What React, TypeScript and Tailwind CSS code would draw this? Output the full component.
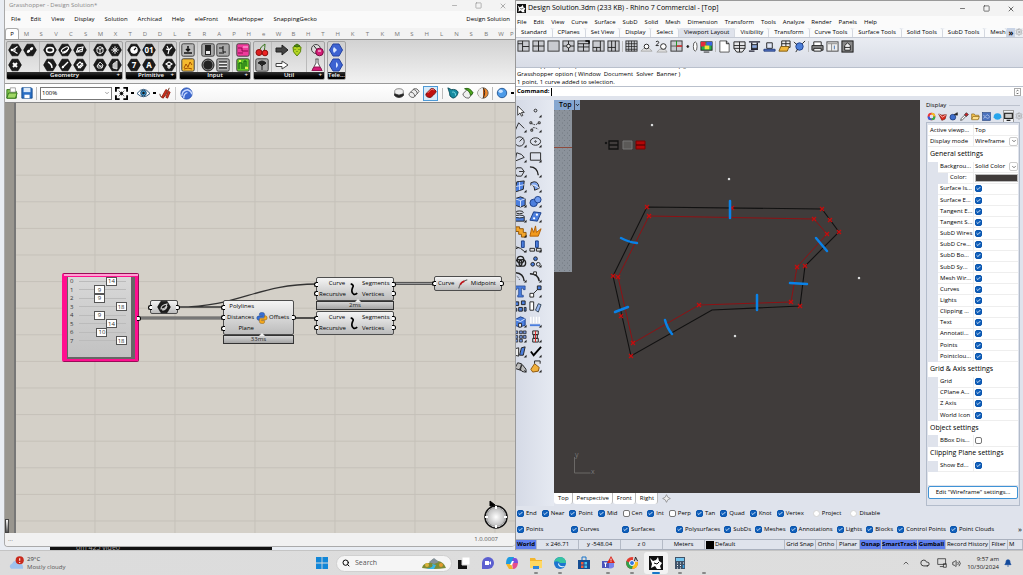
import type { ReactNode } from 'react'
import { Check, ChevronDown, ChevronUp, Cloud, Bell, Volume2, Search, Settings, Minus, Square, X } from 'lucide-react'

/* ---------- shared bits ---------- */

function Icon({ children, className = 'h-[14px] w-[14px]', title }: { children: ReactNode; className?: string; title?: string }) {
  return (
    <svg viewBox="0 0 14 14" className={`shrink-0 ${className}`} fill="none" stroke="#222" aria-label={title}>
      {children}
    </svg>
  )
}

function CheckItem({ label, checked = true, round = false, className = '' }: { label: string; checked?: boolean; round?: boolean; className?: string }) {
  return (
    <label className={`flex shrink-0 items-center gap-[2px] ${className}`}>
      <Tick checked={checked} round={round} />
      {label}
    </label>
  )
}

function Tick({ checked, round = false, id }: { checked: boolean; round?: boolean; id?: string }) {
  return (
    <span className="relative flex h-[7px] w-[7px] shrink-0">
      <input
        id={id}
        type="checkbox"
        defaultChecked={checked}
        className={`peer h-[7px] w-[7px] appearance-none border bg-white checked:border-[#0a55ad] checked:bg-[#0f5fbb] ${
          round ? 'rounded-full border-[#d5d5d5]' : 'rounded-[2px] border-[#777]'
        }`}
      />
      <Check className="pointer-events-none absolute top-px left-px hidden h-[5px] w-[5px] text-white peer-checked:block" strokeWidth={4} />
    </span>
  )
}

function WindowButtons({ color }: { color: string }) {
  return (
    <div className={`flex items-center gap-[17px] pr-[8px] ${color}`}>
      <button aria-label="Minimize"><Minus className="h-[7px] w-[7px]" /></button>
      <button aria-label="Maximize"><Square className="h-[7px] w-[7px]" /></button>
      <button aria-label="Close"><X className="h-[8px] w-[8px]" /></button>
    </div>
  )
}

/* ---------- Grasshopper ribbon ---------- */

const GH_MENU = ['File', 'Edit', 'View', 'Display', 'Solution', 'Archicad', 'Help', 'eleFront', 'MetaHopper', 'SnappingGecko']
const GH_TABS = 'MSVCSMXTDDLERAPHeWBHTHKTKMSHLNSBWP'.split('')

function Hex({ children }: { children: ReactNode }) {
  return (
    <Icon>
      <path d="M4 1.2h6L13.4 7 10 12.8H4L.6 7z" fill="#1b1b1b" stroke="#000" strokeWidth=".6" />
      <g stroke="#fff" strokeWidth="1.1">{children}</g>
    </Icon>
  )
}

function Tile({ children, fill = '#a9a9a9' }: { children: ReactNode; fill?: string }) {
  return (
    <Icon>
      <rect x=".8" y=".8" width="12.4" height="12.4" rx="1.5" fill={fill} stroke="#444" />
      {children}
    </Icon>
  )
}

const hexText = (s: string) => (
  <text x="7" y="10" fontSize="8" fontWeight="700" textAnchor="middle" fill="#fff" stroke="none">{s}</text>
)

interface Group {
  name: string
  sections: ReactNode[][][]
}

const GROUPS: Group[] = [
  {
    name: 'Geometry',
    sections: [
      [
        [<Hex><path d="M3.500 7.500 9.500 3.500M4 7l5.500 3.500M7 5v3" /><circle cx="4" cy="7" r=".8" fill="#fff" /></Hex>, <Hex><path d="M5 5l4 4M9 5l-4 4" strokeWidth="2" /></Hex>],
        [<Hex><path d="M4 9.500l6-5" /><path d="M4.500 9l2-1.500M9.500 5l-2 1.500" strokeWidth="2.500" /></Hex>, null],
      ],
      [
        [<Hex><ellipse cx="7" cy="7" rx="3.500" ry="2.500" strokeWidth="1.500" /></Hex>, <Hex><path d="M5 4q4 2 4 6" strokeWidth="1.500" /></Hex>],
        [<Hex><ellipse cx="7" cy="6.500" rx="4" ry="1.800" transform="rotate(-30 7 6.500)" /><path d="M4 10q5 0 6-4" /></Hex>, <Hex><path d="M4 10l6-6" strokeWidth="1.500" /><circle cx="5" cy="9" r=".6" /></Hex>],
        [<Hex><path d="M3.500 9 5 5l5-1-1 4.500zM5 8l4-2" /></Hex>, <Hex><path d="M4 7l3-3 3 3-3 3zM5 10l5-5" /></Hex>],
      ],
      [
        [<Hex><path d="M4 5l3-1.500L10 5v4l-3 2-3-2zM4 5l3 1.500L10 5M7 6.500V11" strokeWidth=".9" /></Hex>, <Hex><path d="M4 8l3-4 3 3-1 3H5zM5 6l4 4M4 8h6" strokeWidth=".8" /></Hex>],
        [<Hex><path d="M7 3v8M3 7h8M4.500 4.500l5 5M9.500 4.500l-5 5" strokeWidth=".7" /><circle cx="7" cy="7" r="2" strokeWidth=".6" /></Hex>, <Hex><path d="M5 10V6l4-3v8zM7 5v5" strokeWidth=".8" fill="#999" /></Hex>],
      ],
    ],
  },
  {
    name: 'Primitive',
    sections: [
      [
        [<Hex><circle cx="7" cy="7" r="3.200" fill="#fff" /><path d="M7 7 9 5" stroke="#111" /></Hex>, <Hex>{hexText('7')}</Hex>],
        [<Hex>{hexText('01')}</Hex>, <Hex>{hexText('A')}</Hex>],
      ],
      [[<Hex><path d="M5 3l2 4-1 4M7 7l3-3M4 6l3 1" /></Hex>, <Hex><path d="M4 6l3-2 3 2-3 2zM5 9h4M7 8v3" /></Hex>]],
    ],
  },
  {
    name: 'Input',
    sections: [
      [[
        <Tile fill="#b9b9b9"><path d="M7 3v5M5 6l2 2 2-2M3 10h8" stroke="#111" strokeWidth="1.500" /></Tile>,
        <Tile fill="#f5b92e"><path d="M3 10l2-4 2 3 2-5 2 3M3 11l4-1 4 1" stroke="#a24c00" /></Tile>,
      ]],
      [
        [
          <Tile><rect x="4.500" y="2.500" width="5" height="9" fill="#eee" /><rect x="4.500" y="2.500" width="5" height="5" fill="#222" /></Tile>,
          <Icon><circle cx="7" cy="7" r="6" fill="#777" /><circle cx="7" cy="7" r="4" fill="#222" /></Icon>,
        ],
        [
          <Tile><path d="M3 5h4V3M7 5v4h3M3 10h5" stroke="#111" /></Tile>,
          <Tile><path d="M3 4h8M3 7h8M3 10h8" stroke="#333" strokeWidth="1.500" /><path d="M3 5.300h8M3 8.300h8" stroke="#fff" /></Tile>,
        ],
      ],
      [[
        <Tile fill="#f03b9c"><path d="M2 5h4v3h6M2 10h5" stroke="#8b0b4d" /><path d="M7 4h5" stroke="#ffc4e3" /></Tile>,
        <Tile fill="#61c526"><path d="M3 11V5h3v6M8 11V3h2v5" stroke="#0e5c13" /><path d="M9 10h3M3 3h2" stroke="#e1f24c" strokeWidth="2" /></Tile>,
      ]],
    ],
  },
  {
    name: 'Util',
    sections: [
      [[
        <Icon><path d="M4 8Q6 3 10 1M9 9Q10 4 10 1" stroke="#39751d" /><circle cx="4" cy="9.500" r="3" fill="#dd1e1e" stroke="#8c0d0d" /><circle cx="10" cy="10" r="2.800" fill="#e22" stroke="#8c0d0d" /></Icon>,
        <Tile><path d="M7 12V7M7 8 4 5M7 8l3-3" /><path d="M3 5q4-4 8 0-2 3-8 0" fill="#222" /></Tile>,
      ]],
      [
        [
          <Icon><path d="M1 5h6V2l6 5-6 5V9H1z" fill="#444" stroke="#222" /></Icon>,
          <Icon><path d="M1 5.500h6V3l6 4-6 4V8.500H1z" fill="#fff" stroke="#444" /></Icon>,
        ],
        [<Icon><path d="M3 4q4-2 8 0 1 5-4 9-5-4-4-9z" fill="#b4d422" stroke="#5b8410" /><path d="M4 3l3-2 3 2-3 1z" fill="#4e8a12" stroke="#3d6d0b" /><path d="M5 6v1M9 6v1M7 8v1" stroke="#4e7d0d" /></Icon>, null],
      ],
      [[
        <Icon><circle cx="6" cy="6" r="4.500" fill="#ddd" stroke="#444" /><path d="M4 3l5 6" /><circle cx="9.500" cy="9" r="3.800" fill="#d51d77" stroke="#780a3e" /><path d="M8 8h3" stroke="#fff" /></Icon>,
        <Icon><path d="M5.500 1h3M6 1v4l-4 7.500h10L8 5V1" fill="#fff" stroke="#555" /><path d="M4 9h6l2 3.500H2z" fill="#d51d77" stroke="#9a1555" /></Icon>,
      ]],
    ],
  },
  {
    name: 'Tele...',
    sections: [[[
      <Icon><path d="M4 1h6l3.500 6L10 13H4L.5 7z" fill="#3d63d2" stroke="#2442a0" /><path d="M5 4q-2 3 0 6l3-3z" fill="#d8e6ff" stroke="none" /></Icon>,
      <Icon><path d="M4 1h6l3.500 6L10 13H4L.5 7z" fill="#3d63d2" stroke="#2442a0" /><path d="M7 4q4 3 0 6z" fill="#d8e6ff" stroke="none" /></Icon>,
    ]]],
  },
]

function Ribbon() {
  return (
    <div className="flex h-[45px] shrink-0 gap-[2px] border-t border-b border-[#999] bg-linear-to-b from-[#d2d2d2] to-[#f2f2f2] px-px pt-px">
      {GROUPS.map(g => (
        <section key={g.name} className="flex h-[39px] flex-col overflow-hidden rounded-[2px] border border-[#a2a2a2] bg-linear-to-b from-[#cfcfcf] to-[#ececec]">
          <div className="flex flex-1 items-center">
            {g.sections.map((cols, i) => (
              <div key={i} className={`flex ${i > 0 ? 'ml-[2px] border-l border-[#bbb] pl-[2px]' : ''}`}>
                {cols.map((col, c) => (
                  <div key={c} className="grid w-[15px] grid-rows-[15px_15px] place-items-center">
                    {col.map((icon, r) => <span key={r}>{icon}</span>)}
                  </div>
                ))}
              </div>
            ))}
          </div>
          <h2 className="relative h-[7px] bg-linear-to-b from-[#333] to-black text-center text-[6px] leading-[7px] font-semibold text-white">
            {g.name}
            {g.name !== 'Tele...' && <span className="absolute right-[2px]">+</span>}
          </h2>
        </section>
      ))}
    </div>
  )
}

function CanvasToolbar() {
  return (
    <div className="flex h-[19px] shrink-0 items-center gap-[3px] border-b border-[#888] bg-linear-to-b from-white to-[#f4f4f4] px-px">
      <Icon title="Open" className="h-[12px] w-[12px]"><path d="M1 13V3h4l1 2h6v8z" fill="#7fc24a" stroke="#2d6f17" /><path d="M5 1h6v5H5z" fill="#fff" stroke="#999" /><path d="M1 13l2-6h10l-2 6z" fill="#9fd765" stroke="#2d6f17" /></Icon>
      <Icon title="Save" className="h-[12px] w-[12px]"><path d="M1 1h11l1 1v11H1z" fill="#2b6fc4" stroke="#124687" /><path d="M3 1h8v5H3z" fill="#dceaf9" stroke="none" /><path d="M4 9h6v4H4z" fill="#fff" stroke="none" /></Icon>
      <span className="h-[13px] w-px bg-[#bbb]" />
      <label className="relative flex items-center">
        <select aria-label="Zoom" className="h-[13px] w-[72px] appearance-none border border-[#777] bg-white px-px text-[6px] leading-[10px] text-black">
          <option>100%</option>
        </select>
        <ChevronDown className="absolute right-[2px] h-[6px] w-[6px] text-[#444]" />
      </label>
      <Icon title="Zoom extents" className="h-[13px] w-[13px]"><path d="M1 5V1h4M9 1h4v4M13 9v4H9M5 13H1V9" stroke="#000" strokeWidth="2" /><path d="M4 4l6 6M10 4l-6 6" strokeWidth=".7" /><circle cx="7" cy="7" r="1.500" fill="#000" /></Icon>
      <Dot />
      <Icon title="Preview" className="h-[13px] w-[13px]"><path d="M0 7q7-9 14 0-7 7-14 0z" fill="#fff" stroke="#264d70" /><circle cx="7" cy="6.500" r="3" fill="#3c9ad4" stroke="#16476d" /><circle cx="7" cy="6.500" r="1" fill="#000" /></Icon>
      <Dot />
      <Icon title="Sketch" className="h-[12px] w-[12px]"><path d="M1 8q0 4 3 4 4 0 8-11" stroke="#552310" /><path d="M3 12 8 3l2 1-5 9zM8 12l3-7 2 1-3 7z" fill="#d83420" stroke="#8c1b0c" /></Icon>
      <span className="mx-px h-[13px] w-px bg-[#ccc]" />
      <Icon title="Markov" className="h-[13px] w-[13px]"><circle cx="7" cy="7" r="6" fill="#3c68cf" stroke="#254fae" /><path d="M2 10q0-6 6-7 4 1 5 5M4 12q0-5 4-6" stroke="#c7d8ff" strokeWidth="1.500" /></Icon>
      <div className="ml-auto flex items-center gap-[3px]">
        <Icon title="No preview" className="h-[12px] w-[12px]"><path d="M2 5q0-3 5-3t5 3v4q0 3-5 3T2 9z" fill="#eee" stroke="#777" /><path d="M2 8q5 3 10 0v2q-5 4-10 0z" fill="#222" /></Icon>
        <Icon title="Wireframe" className="h-[12px] w-[12px]"><path d="M1 8 7 2q4-1 6 3l-6 7q-5 1-6-4zM3 6q4 0 5 5M6 3q4 0 5 5" fill="#eee" stroke="#555" /></Icon>
        <button aria-label="Shaded preview" className="flex h-[15px] w-[15px] items-center justify-center border border-[#4e9ad6] bg-[#d8ebfa]">
          <Icon className="h-[12px] w-[12px]"><path d="M1 8 7 2q4-1 6 3 0 2-6 7-6 1-6-4z" fill="#c01010" stroke="#6d0505" /><path d="M3 7l4-4q2-.5 4 .5" stroke="#f59088" /></Icon>
        </button>
        <span className="mx-px h-[11px] w-px bg-[#bbb]" />
        <Icon title="Document preview" className="h-[12px] w-[12px]"><path d="M1 1l4 2q6-1 8 3-1 6-6 7-5-2-4-6z" fill="#168ba0" stroke="#0a4854" /><path d="M6 6q4-1 4 4" stroke="#8be5ee" /></Icon>
        <Icon title="Selected preview" className="h-[12px] w-[12px]"><path d="M1 8 6 3l6 5-4 5q-6 0-7-5z" fill="#eee" stroke="#555" /><path d="M3 2q6-2 10 5l-3 3Q9 4 3 2z" fill="#4ea61c" stroke="#1e5c0b" /></Icon>
        <Icon title="Preview quality" className="h-[12px] w-[12px]"><circle cx="7" cy="7" r="6" fill="#f0882b" stroke="#555" /><path d="M7 1a6 6 0 0 0 0 12z" fill="#eee" stroke="none" /><path d="M7 1q4 5 0 12" fill="#b95812" /></Icon>
        <span className="h-[13px] w-px bg-[#bbb]" />
        <Icon title="Preview mesh" className="h-[12px] w-[12px]"><circle cx="7" cy="7" r="5.500" fill="#4d9be8" stroke="#1c4f8d" /><ellipse cx="5.500" cy="5" rx="2.500" ry="2" fill="#c9e3ff" stroke="none" /></Icon>
        <Dot />
      </div>
    </div>
  )
}

const Dot = () => <span className="h-[2px] w-[3px] shrink-0 bg-black" />

/* ---------- Grasshopper canvas ---------- */

const POOL = [14, 9, 9, 18, 9, 14, 10, 18]
const BODY = 'rounded-[2px] border border-[#4d4d4d] bg-linear-to-b from-[#f4f4f4] to-[#bcbcbc]'

function Port({ className }: { className: string }) {
  return <span className={`absolute h-[5px] w-[4px] border border-black bg-white ${className}`} />
}
const PORT_IN = 'left-[-3px] rounded-l-full border-r-0'
const PORT_OUT = 'right-[-3px] rounded-r-full border-l-0'

function ExplodeNode({ time, className }: { time?: string; className: string }) {
  return (
    <div className={`absolute w-[78px] ${className}`}>
      <div className={`relative flex h-[24px] items-center justify-between pr-[4px] pl-[2px] ${BODY}`}>
        <Port className={`top-[4px] ${PORT_IN}`} />
        <Port className={`bottom-[4px] ${PORT_IN}`} />
        <div className="w-[26px] text-right leading-[11px]"><p>Curve</p><p>Recursive</p></div>
        <Icon className="h-[13px] w-[13px]"><path d="M4 1q4 1 2 4-2 5 1 7 2 1 4-1" stroke="#000" strokeWidth="1.800" /></Icon>
        <div className="w-[27px] leading-[11px]"><p>Segments</p><p>Vertices</p></div>
        <Port className={`top-[4px] ${PORT_OUT}`} />
        <Port className={`bottom-[4px] ${PORT_OUT}`} />
      </div>
      {time && <TimeBar>{time}</TimeBar>}
    </div>
  )
}

function TimeBar({ children }: { children: ReactNode }) {
  return (
    <div className="relative h-[9px] border border-[#333] bg-linear-to-b from-[#d5d5d5] to-[#a4a4a4] text-center leading-[7px] text-[#222]">
      <svg viewBox="0 0 6 3" className="absolute top-[-3px] left-1/2 h-[3px] w-[6px]"><path d="M0 3l3-3 3 3z" fill="#eee" /></svg>
      {children}
    </div>
  )
}

function GhCanvas() {
  const cols = [79, 159, 239, 319, 399, 479]
  const rows = Array.from({ length: 17 }, (_, i) => 19 + i * 26.6)
  return (
    <div className="flex min-h-0 flex-1">
      <div className="flex w-[11px] shrink-0 items-end border-r-2 border-[#777] bg-[#99968f]">
        <span className="h-[14px] w-[4px] border border-[#444] bg-linear-to-b from-white to-[#555]" />
      </div>
      <div className="relative flex-1 overflow-hidden bg-[#d4d0c8] text-[6px] text-black">
        <svg className="absolute inset-0 h-full w-full" fill="none">
          <g stroke="#c5c1b9">
            {cols.map(x => <line key={x} x1={x} x2={x} y1="0" y2="100%" />)}
            {rows.map(y => <line key={y} x1="0" x2="100%" y1={y} y2={y} />)}
          </g>
          <path d="M162 204h46M162 204c62 0 78-23 139-23" stroke="#333" strokeWidth="1.300" />
          <path d="M123 215h84M378 180.500h40" stroke="#555" strokeWidth="3" />
          <path d="M123 215h84M378 180.500h40" stroke="#999" />
          <path d="M278 215h23" stroke="#222" strokeWidth="1.500" />
          <g transform="translate(480 414)">
            <circle r="11" fill="#eee" stroke="#111" strokeWidth="1.500" />
            <circle r="9.500" fill="url(#knob)" stroke="#999" />
            <path d="M-6-16l5 4-5 1z" fill="#000" stroke="#000" />
            <path d="M-11 0h3M8 0h3M0 8v3M0-11v3" stroke="#fff" strokeWidth="2" />
          </g>
          <defs>
            <radialGradient id="knob"><stop stopColor="#fff" /><stop offset="1" stopColor="#bbb" /></radialGradient>
          </defs>
        </svg>

        {/* gene pool */}
        <div className="absolute top-[170px] left-[46px] h-[89px] w-[77px] rounded-[2px] border border-[#9b0b58] border-l-2 border-l-[#ff0f8f] bg-[#ff0f8f] px-[3px] pt-[3px] pb-[2px] [border-left-style:dotted]">
          <div className="h-full border-r-4 border-b-2 border-l border-[#666] bg-linear-to-b from-[#d8d8d8] to-[#c2c2c2] pl-[2px]">
            <ul className="flex h-[68px] flex-col leading-none text-[#333]">
              {POOL.map((v, i) => (
                <li key={i} className="relative flex min-h-0 flex-1 items-center">
                  <span className="w-[9px]">{i}</span>
                  <span className="h-px w-[47px] bg-[#bbb]" />
                  <span
                    className="absolute flex h-[9px] w-[11px] items-center justify-center border border-[#555] bg-white"
                    style={{ left: 24 + (v - 9) * 2.4 }}
                  >
                    {v}
                  </span>
                </li>
              ))}
            </ul>
          </div>
          <span className="absolute top-0 right-0 left-0 h-[2px] bg-[#ffa0d2]" />
          <Port className={`top-[42px] ${PORT_OUT}`} />
        </div>

        {/* geometry param */}
        <div className={`absolute top-[197px] left-[134px] flex h-[14px] w-[28px] items-center justify-center ${BODY}`}>
          <Port className={`top-[4px] ${PORT_IN}`} />
          <Hex><path d="M4 9q0-4 6-5-1 5-6 5zM5 10q4 0 5-4" stroke="#ccc" /></Hex>
          <Port className={`top-[4px] ${PORT_OUT}`} />
        </div>

        {/* python script */}
        <div className="absolute top-[197px] left-[207px] w-[71px]">
          <div className={`relative flex h-[35px] items-center justify-between pr-[4px] pl-[2px] ${BODY}`}>
            <Port className={`top-[4px] ${PORT_IN}`} />
            <Port className={`top-[14px] ${PORT_IN}`} />
            <Port className={`top-[25px] ${PORT_IN}`} />
            <div className="w-[28px] text-right leading-[11px]"><p>Polylines</p><p>Distances</p><p>Plane</p></div>
            <Icon className="h-[12px] w-[12px]">
              <path d="M7 .5c-3 0-3 1-3 3V4h3.500v.8H2.500C.5 5 .5 9 2.500 9.500H4V8q0-1.500 2-1.500h3q1-.3 1-1.500V2.500Q10 .5 7 .5z" fill="#376fd6" stroke="#23498f" strokeWidth=".6" />
              <path d="M7 13.500c3 0 3-1 3-3V10H6.500v-.8h5c2-.2 2-4.200 0-4.700H10V6q0 1.500-2 1.500H5q-1 .3-1 1.500v2.500q0 2 3 2z" fill="#f4a81d" stroke="#8f6318" strokeWidth=".6" />
            </Icon>
            <p>Offsets</p>
            <Port className={`top-[14px] ${PORT_OUT}`} />
          </div>
          <TimeBar>33ms</TimeBar>
        </div>

        <ExplodeNode time="2ms" className="top-[174px] left-[300px]" />
        <ExplodeNode className="top-[208px] left-[300px]" />

        <div className={`absolute top-[173px] left-[418px] flex h-[15px] w-[68px] items-center justify-between pr-[5px] pl-[3px] ${BODY}`}>
          <Port className={`top-[4px] ${PORT_IN}`} />
          <p>Curve</p>
          <Icon className="h-[10px] w-[10px]"><path d="M1 13Q3 4 13 1" stroke="#555" strokeWidth="1.500" /><path d="M3 8q2-4 6-5" stroke="#c2151b" strokeWidth="2.500" /></Icon>
          <p>Midpoint</p>
          <Port className={`top-[4px] ${PORT_OUT}`} />
        </div>
      </div>
    </div>
  )
}

function Grasshopper() {
  return (
    <div className="flex min-h-0 min-w-0 flex-col bg-[#e9edf3] pl-[4px]">
      <main className="flex min-h-0 flex-1 flex-col overflow-hidden rounded-b-[4px] border-b border-l border-[#aaa] bg-[#f3f3f3]">
        <header className="flex h-[11px] shrink-0 items-center justify-between pl-[4px] leading-[9px] text-[#888]">
          <h1>Grasshopper - Design Solution*</h1>
          <WindowButtons color="text-[#888]" />
        </header>
        <nav className="flex h-[17px] shrink-0 items-center gap-[10px] bg-[#fafafa] pr-[5px] pl-[6px]">
          {GH_MENU.map(m => <button key={m}>{m}</button>)}
          <span className="ml-auto whitespace-nowrap">Design Solution</span>
        </nav>
        <div className="flex h-[11px] shrink-0 items-end text-[#777]">
          <button className="h-[11px] w-[14px] shrink-0 rounded-t-[3px] border border-b-0 border-[#aaa] bg-white leading-[9px] text-black">P</button>
          {GH_TABS.map((t, i) => (
            <button key={i} className={`h-[10px] min-w-0 leading-[9px] ${i === GH_TABS.length - 1 ? 'flex-[7]' : 'flex-[15]'}`}>{t}</button>
          ))}
        </div>
        <Ribbon />
        <CanvasToolbar />
        <GhCanvas />
        <footer className="flex h-[13px] shrink-0 items-center justify-between bg-[#f1f1f1] pr-[17px] pl-[3px] text-[#555]">
          <span>...</span>
          <span>1.0.0007</span>
        </footer>
      </main>
      <div className="flex h-[3px] shrink-0">
        <p className="ml-[46px] w-[222px] overflow-hidden bg-[#111] pl-[26px] text-[7px] leading-[2px] text-[#aaa]">om 425 video</p>
      </div>
    </div>
  )
}

/* ---------- Rhino toolbars ---------- */

const RH_MENU = ['File', 'Edit', 'View', 'Curve', 'Surface', 'SubD', 'Solid', 'Mesh', 'Dimension', 'Transform', 'Tools', 'Analyze', 'Render', 'Panels', 'Help']
const RH_TABS = ['Standard', 'CPlanes', 'Set View', 'Display', 'Select', 'Viewport Layout', 'Visibility', 'Transform', 'Curve Tools', 'Surface Tools', 'Solid Tools', 'SubD Tools', 'Mesh']

const box = <rect x="1" y="1" width="12" height="11" fill="#c9cbd0" stroke="#333" />
const SEP = 'sep'

const VIEW_TOOLS: (ReactNode | string)[] = [
  <>{box}<path d="M6 1v11M6 7h7M1 4h5" /></>,
  <>{box}<path d="M7 1v11M1 6.500h12" /></>,
  box,
  <>{box}<path d="M7 1v11M1 6.500h12" /><circle cx="7" cy="6.500" r="2" fill="#eee" /></>,
  <>{box}<path d="M7 4v8M1 7.500h12M1 4h12" /><path d="M9 1h4v3" stroke="#000" strokeWidth="1.500" /></>,
  <>{box}<path d="M9 1v11M1 8h8M5 8v4" /></>,
  <>{box}<path d="M5 1v11M9 1v11M1 8h8" /></>,
  SEP,
  <>{box}<path d="M4 1v11M7 1v11M10 1v11M1 4h12M1 7h12M1 10h12" strokeWidth=".8" /></>,
  <><path d="M1 12l3-3h6l3 3z" fill="#ddd" stroke="#aaa" /><circle cx="7" cy="7" r="2.500" fill="#fff" /></>,
  <><path d="M2 13l3-3h6l2 3z" fill="#ddd" stroke="#aaa" /><circle cx="9" cy="7" r="3" fill="#fff" /><path d="M1 2q3-2 3 1L1 6h3" /></>,
  <>{box}<path d="M7 1v11M1 6.500h12" stroke="#555" /><path d="M7 6.500h6" stroke="#d22" strokeWidth="1.500" /><path d="M7 6.500V1" stroke="#292" /></>,
  <><circle cx="3" cy="7" r="1" fill="#222" /><ellipse cx="11" cy="7" rx="2" ry="5" fill="#fff" stroke="#555" /></>,
  <><rect x="1" y="2" width="12" height="9" fill="#24ad49" /><path d="M1 2h5v5H1z" fill="#e6283c" stroke="none" /><path d="M7 2h6v4H7z" fill="#3d63e0" stroke="none" /><path d="M5 6h5v4H5z" fill="#f2e63a" stroke="none" /><path d="M4 13h6" /></>,
  SEP,
  <><path d="M2 1h7l3 3v9H2z" fill="#fff" stroke="#555" /><path d="M9 1v3h3" /></>,
  <><path d="M1 2h12v7l-3 4H4L1 9z" fill="#e8e8ea" /><path d="M7 2v11M1 6h12M1 9h12" /></>,
  <><path d="M1 2h12M4 3v7h6V3M1 12h6" stroke="#223" strokeWidth="1.500" /><path d="M4 5h6v4H4z" fill="#8ca7dd" /></>,
  <><path d="M4 3h6v6H4z" fill="#dfe6f5" /><path d="M1 10h12v2H1z" fill="#5576c8" stroke="#223b7d" /></>,
  <><path d="M4 1h9v7H4zM8.500 1v6M4 4h9" fill="#eee" /><path d="M1 12l2-5h9l-2 5z" fill="#f2b83b" stroke="#7e5a10" /></>,
  <><circle cx="7" cy="7" r="4" fill="#4c7fd8" stroke="#1f4290" /><path d="M1 2l3 3M13 1l-3 3M3 13l2-3" /></>,
  SEP,
  <><path d="M3 6V2h8v4" fill="#fff" /><path d="M1 6h12v5H1z" fill="#888" /><path d="M3 9h8v3H3z" fill="#eee" /></>,
  <><rect x="1" y="2" width="12" height="10" fill="#eee" stroke="#444" /><path d="M2 4h10M6 4v8" stroke="#888" /><path d="M9 6v4" stroke="#47b" /></>,
  <><rect x="1" y="1" width="12" height="12" fill="#888" stroke="#111" /><path d="M4 11V6l3-3 3 3v5z" fill="#eee" /><path d="M4 8h6" /></>,
]

const corner = <path d="M13.500 10.500v3h-3z" fill="#222" stroke="none" />
const B = '#4b7ede'
const TOOLBOX: ReactNode[] = [
  <path d="M4 1v10l2.500-2.500L8 12l1.500-.7L8 8h3z" fill="#fff" strokeWidth=".9" />,
  <><circle cx="7" cy="6" r="1.500" />{corner}</>,
  <><path d="M1 12 5 3l6 6" />{corner}</>,
  <><path d="M2 3q5 4 8 0M3 11q0-5 7-1" strokeDasharray="2 1" /><path d="M1 2h2v2H1zM10 2h2v2h-2zM2 10h2v2H2z" fill="#fff" />{corner}</>,
  <><circle cx="6" cy="7" r="5" /><path d="M6 7l4-4" />{corner}</>,
  <><ellipse cx="7" cy="7" rx="5.500" ry="4" /><circle cx="7" cy="7" r=".8" />{corner}</>,
  <><path d="M1 12 3 3q6 1 8 5L1 12" />{corner}</>,
  <><path d="M1.500 3h11v8h-11z" />{corner}</>,
  <><path d="M3 3h5l3 4-3 5H3L.5 7z" /><path d="M5.500 7h5" />{corner}</>,
  <><path d="M1 2q8 0 9 9" strokeWidth="1.500" />{corner}</>,
  <><path d="M3 2l8-1-1 9-9 3z" fill={B} /><path d="M6 2v9M2 7l9-2" stroke="#cfe0ff" />{corner}</>,
  <><path d="M2 3q8-4 9 6l-5 2q0-6-4-5z" fill="#7fa6ee" /><path d="M2 6q4-2 9 3" stroke="#fff" />{corner}</>,
  <><path d="M1 4l6-2 5 2v7l-5 2-6-2z" fill={B} /><path d="M1 4l6 2 5-2M7 6v7" stroke="#dce8ff" />{corner}</>,
  <><circle cx="5" cy="8.500" r="4" fill={B} stroke="#173a84" /><circle cx="9.500" cy="5" r="3.500" fill="#6f9bef" stroke="#173a84" />{corner}</>,
  <><ellipse cx="6" cy="2.500" rx="4" ry="1.500" /><path d="M1 7h10v5H1z" fill={B} /><ellipse cx="6" cy="7" rx="5" ry="1.500" fill="#dce8ff" />{corner}</>,
  <><path d="M1 11l4-9 8 1-4 9z" fill={B} stroke="#173a84" /><circle cx="8.500" cy="5" r="1.200" fill="#fff" stroke="none" /><circle cx="5.500" cy="9" r="1.200" fill="#fff" stroke="none" />{corner}</>,
  <><path d="M2 2h4v2h4v4h3v5H8v-3H5V7H2z" fill="#f2a52c" stroke="#8a5206" />{corner}</>,
  <path d="M1 12 3 3l2 5 2-7 1 7 5-4-3 8z" fill="#f29a1e" stroke="#b05f05" />,
  <><path d="M8 1h3v7H8z" fill={B} stroke="#173a84" /><path d="M1 7l6 2 5 4M1 10l4-2" />{corner}</>,
  <><path d="M7 1h3v7H7z" fill={B} stroke="#173a84" /><path d="M1 9h5v3H1zM8 9h5v3H8z" fill="#ddd" />{corner}</>,
  <><circle cx="5" cy="8.500" r="3.500" strokeWidth="1.500" /><circle cx="9" cy="8.500" r="3.500" strokeWidth="1.500" /><circle cx="7" cy="5" r="3.500" strokeWidth="1.500" /></>,
  <><circle cx="4" cy="10" r="2" fill={B} /><circle cx="10" cy="10" r="2" /><circle cx="7" cy="4" r="2" fill={B} />{corner}</>,
  <><path d="M1 3q9 0 10 9" strokeWidth="1.500" /><path d="M1 6q4 1 5 5" strokeDasharray="1 1" />{corner}</>,
  <><path d="M1 4q9 0 10 8" strokeWidth="1.500" /><path d="M5 2h3v3H5z" fill="#fff" />{corner}</>,
  <path d="M1 1h11v4h-2V3.500H8V11h2v2H4v-2h1V3.500H3V5H1z" fill={B} stroke="#173a84" strokeWidth=".7" />,
  <><path d="M4 10l6-6" /><path d="M9 1h4v4H9z" fill={B} /><path d="M1 9h4v4H1z" fill="#fff" />{corner}</>,
  <path d="M1 2h4v4H1zM8 1h4v4H8zM5 8h4v4H5zM1 9h2v3H1zM11 8h2v4h-2z" fill={B} />,
  <><path d="M1 2h4v9H1z" fill="#fff" /><path d="M7 11l3-7 3 1-3 8z" fill="#9bb8f0" stroke="#345" /></>,
  <><path d="M1 5l6-3 5 2v7l-6 2-5-2z" fill={B} stroke="#173a84" /><path d="M1 5l6 2 5-3" stroke="#dce8ff" /><path d="M5 9h3v4H5z" fill="#fff" />{corner}</>,
  <><path d="M1 11h11" stroke={B} strokeWidth="2" /><path d="M2 2v7M5 2v7M8 2v7M11 2v7" stroke="#fff" strokeWidth="1.500" />{corner}</>,
  <><path d="M1 1h3v3H1zM6 1h3v3H6zM10 1h3v3h-3zM1 6h3v3H1zM6 6h3v3H6zM10 6h3v3h-3zM1 10h3v3H1zM6 10h3v3H6z" fill="#7395dd" strokeWidth=".8" />{corner}</>,
  <><path d="M4 1h6v4H4zM5 5h4v4H5zM4 9h6v4H4z" fill="#ddd" /><path d="M7 1v12" stroke="#d22" />{corner}</>,
  <><path d="M1 4l4-1v9l-4-1z" fill="#eee" /><path d="M6 11l2-8 4-1-2 9z" fill={B} />{corner}</>,
  <><path d="M2 7l3 4 8-9" stroke="#000" strokeWidth="2" />{corner}</>,
  <><path d="M1 9l3-6 4 1-1 7zM6 10l3-5 4 5-3 3z" fill="#bbb" />{corner}</>,
  <><path d="M2 10l4-6 5 4-1 4-6 1z" fill="#f1b13c" stroke="#8a5206" /><path d="M6 4V1h6v3" fill="#ddd" />{corner}</>,
]

/* ---------- Rhino viewport ---------- */

const OUTER = [[93, 107], [268, 109], [285, 132], [251, 166], [246, 206], [158, 210], [77, 256], [59, 176]]
const INNER = [[95, 116], [260, 119], [273, 134], [243, 167], [237, 202], [145, 205], [79, 243], [64, 177]]
const KNOTS = [...OUTER.filter((_, i) => i !== 5), ...INNER, [276, 120], [67, 216], [178, 108]]
const STROKES = ['M67 138q7 4 16 5', 'M176 101v17', 'M262 138q5 6 11 13', 'M236 183l17 1', 'M203 195v15', 'M111 220q2 8 7 14', 'M61 212l13-5']

function Viewport() {
  const pts = (p: number[][]) => p.map(c => c.join(',')).join(' ')
  return (
    <div className="relative min-h-0 flex-1 overflow-hidden bg-[#403c3b]">
      <svg className="absolute inset-0 h-full w-full" fill="none">
        <defs>
          <pattern id="dots" width="5" height="5" patternUnits="userSpaceOnUse">
            <rect width="5" height="5" fill="#8b929b" />
            <path d="M0 .5h1M3 3h1" stroke="#747b84" />
          </pattern>
        </defs>
        <rect width="18" height="172" fill="url(#dots)" />
        <path d="M0 47.500h18" stroke="#8e4a3c" />
        <g stroke="#111">
          <circle cx="52" cy="43" r=".8" fill="#111" />
          <path d="M55 41h9v8h-9zM55 45h9" strokeWidth="1.300" />
          <path d="M69 41h9v8h-9z" fill="#5b5957" stroke="#777" />
          <path d="M82 41h9v8h-9z" fill="#b30707" stroke="#7b0303" />
          <path d="M82 45h9" stroke="#3c0000" />
        </g>
        <polygon points={pts(OUTER)} stroke="#111" strokeWidth="1.100" />
        <polygon points={pts(INNER)} stroke="#8e1114" />
        {KNOTS.map(([x, y], i) => (
          <path key={i} d={`M${x - 2} ${y - 2}l4 4m0-4l-4 4`} stroke="#c40d0d" strokeWidth="1.300" />
        ))}
        {STROKES.map(d => <path key={d} d={d} stroke="#0a82e8" strokeWidth="2.500" strokeLinecap="round" />)}
        {[[98, 25], [175, 79], [305, 178], [181, 236]].map(([x, y]) => (
          <circle key={x} cx={x} cy={y} r="1.500" fill="#fff" stroke="#111" strokeWidth=".5" />
        ))}
        <path d="M20.500 357v16h16" stroke="#6b6866" />
        <text x="21" y="357" fontSize="7" fill="#777">y</text>
        <text x="37" y="374" fontSize="7" fill="#777">x</text>
      </svg>
      <button className="relative flex h-[10px] w-[26px] items-center justify-between bg-[#86a7d0] pl-[5px] text-[7px] font-semibold">
        Top
        <span className="flex h-full w-[6px] items-center justify-center border-l border-[#445]"><ChevronDown className="h-[6px] w-[6px]" strokeWidth={4} /></span>
      </button>
    </div>
  )
}

/* ---------- Rhino display panel ---------- */

interface Prop {
  label: string
  indent?: number
  value?: boolean | string
  kind?: 'heading' | 'text' | 'select' | 'color'
}

const on = (label: string): Prop => ({ label, indent: 1, value: true })

const PROPS: Prop[] = [
  { label: 'Active viewp...', kind: 'text', value: 'Top' },
  { label: 'Display mode', kind: 'select', value: 'Wireframe' },
  { label: 'General settings', kind: 'heading' },
  { label: 'Backgrou...', indent: 1, kind: 'select', value: 'Solid Color' },
  { label: 'Color:', indent: 2, kind: 'color' },
  on('Surface Is...'), on('Surface E...'), on('Tangent E...'), on('Tangent S...'),
  on('SubD Wires'), on('SubD Cre...'), on('SubD Bo...'), on('SubD Sy...'),
  on('Mesh Wir...'), on('Curves'), on('Lights'), on('Clipping ...'),
  on('Text'), on('Annotati...'), on('Points'), on('Pointclou...'),
  { label: 'Grid & Axis settings', kind: 'heading' },
  on('Grid'), on('CPlane A...'), on('Z Axis'), on('World Icon'),
  { label: 'Object settings', kind: 'heading' },
  { label: 'BBox Dis...', indent: 1, value: false },
  { label: 'Clipping Plane settings', kind: 'heading' },
  on('Show Ed...'),
]

const INDENTS = ['w-0', 'w-[10px]', 'w-[20px]']

function PropRow({ prop }: { prop: Prop }) {
  if (prop.kind === 'heading') {
    return <h3 className="flex flex-[14] items-center pl-[2px] text-[7px] whitespace-nowrap">{prop.label}</h3>
  }
  return (
    <div className="flex min-h-0 flex-[11] items-stretch">
      <span className={`shrink-0 bg-[#dfe3ec] ${INDENTS[prop.indent ?? 0]}`} />
      <label htmlFor={prop.label} className="flex flex-1 items-center border-b border-[#eee] pl-[2px] whitespace-nowrap">{prop.label}</label>
      <div className="flex w-[45px] shrink-0 items-center border-b border-l border-[#eee] pl-px">
        {prop.kind === 'text' && <output id={prop.label}>{prop.value}</output>}
        {prop.kind === 'select' && (
          <span className="relative flex h-full w-full items-center">
            <select id={prop.label} className="h-full w-full appearance-none bg-transparent whitespace-nowrap">
              <option>{prop.value}</option>
            </select>
            <span className="pointer-events-none absolute right-0 flex h-[9px] w-[9px] items-center justify-center rounded-[2px] border border-[#ccc] bg-white">
              <ChevronDown className="h-[6px] w-[6px]" />
            </span>
          </span>
        )}
        {prop.kind === 'color' && <button id={prop.label} aria-label="Background color" className="h-[8px] w-full border border-[#bbb] bg-[#403c3b]" />}
        {prop.kind === undefined && <Tick id={prop.label} checked={prop.value === true} />}
      </div>
    </div>
  )
}

const PANEL_ICONS: ReactNode[] = [
  <><circle cx="7" cy="7" r="4.500" stroke="#e33" strokeWidth="3" /><path d="M7 2.500A4.500 4.500 0 0 1 11.500 7" stroke="#f3c320" strokeWidth="3" /><path d="M11.500 7A4.500 4.500 0 0 1 7 11.500" stroke="#2db34a" strokeWidth="3" /><path d="M7 11.500A4.500 4.500 0 0 1 2.500 7" stroke="#315ee0" strokeWidth="3" /></>,
  <><path d="M1 3l5 2 7-1-2 7-5 2z" fill="#dc2a1d" stroke="#70130b" /><path d="M1 3l6 5 6-4" stroke="#fff" /></>,
  <><circle cx="6" cy="8" r="4.500" fill="#3f6fcc" stroke="#162f68" /><path d="M8 4l5-3v4z" fill="#222" /></>,
  <><path d="M1 13l3-1 5-5-2-2-5 5z" fill="#fff" /><path d="M7 4l3-3 3 3-3 3z" fill="#c3242c" /></>,
  <><path d="M1 11V3h4l1 2h6v6z" fill="#f4c04c" stroke="#8a6413" /><path d="M1 12l2-5h10l-2 5z" fill="#ffe08c" stroke="#8a6413" /></>,
  <><rect x="1" y="1" width="12" height="12" fill="#4a71be" stroke="#21407c" /><path d="M2 5l3 2 3-3 4 3M2 10l3-2 4 2 3-2" stroke="#cfdcf5" /></>,
  <path d="M1 8q0-6 6-6t6 6q-2 4-6 4T1 8z" fill="#27a5ec" stroke="none" />,
  <><rect x="1" y="2" width="12" height="8" fill="#ccc" stroke="#222" strokeWidth="1.800" /><path d="M4 13h6" strokeWidth="2" /></>,
]

function DisplayPanel() {
  return (
    <aside className="flex w-[103px] shrink-0 flex-col pr-[3px] pl-[6px]">
      <h2 className="flex h-[10px] shrink-0 items-center gap-[3px] leading-[10px]">
        Display
        <span className="h-px flex-1 bg-[#bcc2ce]" />
      </h2>
      <div className="flex h-[12px] shrink-0 items-center">
        {PANEL_ICONS.map((icon, i) => (
          <button key={i} aria-label={`Panel ${i + 1}`} className={`flex h-[12px] w-[11px] shrink-0 items-center justify-center ${i === 7 ? 'border border-b-0 border-[#999] bg-[#f0f2f6]' : ''}`}>
            <Icon className="h-[9px] w-[9px]">{icon}</Icon>
          </button>
        ))}
        <Settings className="ml-px h-[8px] w-[8px] shrink-0 text-[#999]" />
      </div>
      <div className="flex min-h-0 flex-1 flex-col border border-[#b3bccb] bg-[#dfe3ec] px-px pt-[2px] pb-[6px]">
        <form className="flex min-h-0 flex-1 flex-col bg-white pb-[13px]">
          {PROPS.map(p => <PropRow key={p.label} prop={p} />)}
        </form>
        <button className="mt-px h-[13px] rounded-[2px] border border-[#3f93d6] bg-white whitespace-nowrap">Edit "Wireframe" settings...</button>
      </div>
    </aside>
  )
}

/* ---------- Rhino window ---------- */

const OSNAPS = ['End', 'Near', 'Point', 'Mid', 'Cen', 'Int', 'Perp', 'Tan', 'Quad', 'Knot', 'Vertex']
const FILTERS = ['SubDs', 'Meshes', 'Annotations', 'Lights', 'Blocks', 'Control Points', 'Point Clouds']
const STATUS = [
  { label: 'World', cls: 'w-[21px] justify-center bg-[#5f7fee] font-bold' },
  { label: 'x 246.71', cls: 'w-[42px] justify-center' },
  { label: 'y -548.04', cls: 'w-[42px] justify-center' },
  { label: 'z 0', cls: 'w-[42px] justify-center' },
  { label: 'Meters', cls: 'w-[42px] justify-center' },
  { label: 'Default', cls: 'flex-1 gap-px pl-px' },
  { label: 'Grid Snap', cls: 'w-[31px] justify-center' },
  { label: 'Ortho', cls: 'w-[21px] justify-center' },
  { label: 'Planar', cls: 'w-[23px] justify-center' },
  { label: 'Osnap', cls: 'w-[22px] justify-center bg-[#5f7fee] font-bold' },
  { label: 'SmartTrack', cls: 'w-[36px] justify-center bg-[#5f7fee] font-bold' },
  { label: 'Gumball', cls: 'w-[28px] justify-center bg-[#5f7fee] font-bold' },
  { label: 'Record History', cls: 'w-[44px] justify-center' },
  { label: 'Filter', cls: 'w-[18px] justify-center' },
  { label: 'M', cls: 'w-[15px] pl-px' },
]

function Rhino() {
  return (
    <div className="flex min-h-0 min-w-0 flex-col overflow-hidden border-t border-l border-[#999] bg-[#dfe3ec]">
      <header className="flex h-[15px] shrink-0 items-center justify-between bg-[#f3f3f3] pl-px">
        <h1 className="flex items-center gap-[2px] text-[7px] whitespace-nowrap">
          <RhinoMark className="h-[9px] w-[9px]" />
          Design Solution.3dm (233 KB) - Rhino 7 Commercial - [Top]
        </h1>
        <WindowButtons color="text-[#222]" />
      </header>
      <nav className="flex h-[12px] shrink-0 items-center gap-[7px] bg-[#fbfbfb] pl-px">
        {RH_MENU.map(m => <button key={m}>{m}</button>)}
      </nav>
      <div className="flex h-[10px] shrink-0 items-stretch border-b border-[#c5cad4] bg-[#eceff4]">
        <div className="flex min-w-0 flex-1 overflow-hidden">
          {RH_TABS.map(t => (
            <button
              key={t}
              className={`shrink-0 rounded-t-[3px] border-r border-[#d4d8e0] pl-[5px] leading-[9px] whitespace-nowrap ${t === 'Viewport Layout' ? 'bg-[#dfe3ec]' : 'bg-[#fafbfc]'} ${t === 'Mesh' ? 'pr-0' : 'pr-[5px]'}`}
            >
              {t}
            </button>
          ))}
        </div>
        <button className="w-[8px] shrink-0 bg-[#c9d4e6] text-[8px] leading-[8px] font-bold">»</button>
        <Settings className="h-[8px] w-[8px] shrink-0 text-[#999]" />
      </div>
      <div className="flex h-[29px] shrink-0 items-start bg-linear-to-b from-[#e9ecf2] to-[#d8dce6] pt-[2px]">
        {VIEW_TOOLS.map((t, i) =>
          t === SEP ? (
            <span key={i} className="mx-px mt-px h-[11px] w-px bg-[#bbb]" />
          ) : (
            <button key={i} aria-label={`View tool ${i + 1}`} className="flex w-[15px] shrink-0 justify-center">
              <Icon className="h-[13px] w-[13px]">{t}</Icon>
            </button>
          )
        )}
      </div>

      {/* command history + prompt */}
      <div className="flex h-[20px] shrink-0 flex-col justify-end overflow-hidden border-t border-b border-[#b9c0cc] bg-white pl-px leading-[8px]">
        <p className="shrink-0">Grasshopper option ( Window&nbsp; Document&nbsp; Solver&nbsp; Banner ): _Solver</p>
        <p className="shrink-0">Grasshopper option ( Window&nbsp; Document&nbsp; Solver&nbsp; Banner )</p>
        <p className="shrink-0">1 point, 1 curve added to selection.</p>
      </div>
      <label className="flex h-[9px] shrink-0 items-center gap-[2px] bg-white pr-[2px] pl-px font-bold">
        Command:
        <input className="h-[8px] min-w-0 flex-1 border-l border-black outline-none" />
        <span className="flex flex-col border border-[#aaa]"><ChevronUp className="h-[3px] w-[5px]" strokeWidth={5} /><ChevronDown className="h-[3px] w-[5px]" strokeWidth={5} /></span>
      </label>

      <div className="mt-[4px] flex min-h-0 flex-1">
        <div className="grid w-[38px] shrink-0 auto-rows-[15px] grid-cols-[9px_15px] content-start gap-x-[3px] bg-linear-to-r from-[#d5dae6] to-[#e6eaf2] pt-[4px]">
          {TOOLBOX.map((t, i) => (
            <button key={i} aria-label={`Tool ${i + 1}`} className="flex items-center justify-center">
              <Icon className="h-[13px] w-[13px]">{t}</Icon>
            </button>
          ))}
        </div>
        <div className="flex min-w-0 flex-1 flex-col">
          <Viewport />
          <div className="flex h-[13px] shrink-0 items-start">
            {['Top', 'Perspective', 'Front', 'Right'].map(t => (
              <button key={t} className="h-[11px] rounded-b-[3px] border-r border-[#bbb] bg-white pr-[3px] pl-[4px] leading-[11px]">{t}</button>
            ))}
            <Icon className="mt-px ml-[4px] h-[9px] w-[9px]"><path d="M7 1l2 4 4 2-4 2-2 4-2-4-4-2 4-2z" fill="#eee" stroke="#777" /></Icon>
          </div>
        </div>
        <DisplayPanel />
      </div>

      <div className="flex h-[15px] shrink-0 items-center gap-[5px] pl-px">
        {OSNAPS.map(o => <CheckItem key={o} label={o} checked={o !== 'Cen' && o !== 'Perp'} />)}
        <CheckItem label="Project" checked={false} round className="ml-[4px]" />
        <CheckItem label="Disable" checked={false} round className="ml-[4px]" />
      </div>
      <div className="flex h-[16px] shrink-0 items-center gap-[4px] pr-px pl-px whitespace-nowrap">
        <CheckItem label="Points" className="w-[50px]" />
        <CheckItem label="Curves" className="w-[47px]" />
        <CheckItem label="Surfaces" className="w-[50px]" />
        <CheckItem label="Polysurfaces" />
        {FILTERS.map(f => <CheckItem key={f} label={f} />)}
        <span className="ml-auto text-[8px]">»</span>
      </div>
      <footer className="mt-[2px] flex h-[11px] shrink-0 border-t border-b border-[#aab1be] leading-[9px] whitespace-nowrap">
        {STATUS.map(s => (
          <button key={s.label} className={`flex shrink-0 items-center border-r border-[#b4bac6] ${s.cls}`}>
            {s.label === 'Default' && <span className="h-[8px] w-[8px] bg-black" />}
            {s.label}
          </button>
        ))}
      </footer>
    </div>
  )
}

function RhinoMark({ className }: { className: string }) {
  return (
    <Icon className={className}>
      <rect width="14" height="14" fill="#111" stroke="none" />
      <path d="M1 2l3 3 3-1 2-3 1 4 3 2-2 3 1 3H8L6 10l-4 2 1-4z" fill="#fff" stroke="none" />
      <path d="M5 7l3 1 2-2" stroke="#111" />
    </Icon>
  )
}

/* ---------- Windows taskbar ---------- */

const APPS: { name: string; running?: boolean; icon: ReactNode }[] = [
  { name: 'Task view', icon: <><path d="M1 4h9v9H1z" fill="#111" stroke="none" /><path d="M5 1h8v8H5z" fill="#fff" stroke="#ddd" /></> },
  { name: 'Chat', icon: <><path d="M1 7a6 6 0 1 1 6 6H1z" fill="#5b5fd0" stroke="none" /><path d="M4 5h4v4H4zM8 7l2-2v4z" fill="#fff" stroke="none" /></> },
  { name: 'Copilot', icon: <><path d="M4 1h5L7 8H1q0-6 3-7z" fill="#1e9be0" stroke="none" /><path d="M8 2h2q3 0 3 5l-3 1-3-2z" fill="#7c4dde" stroke="none" /><path d="M1 8h5l2 5H4z" fill="#f2b52c" stroke="none" /><path d="M7 7h6q-1 6-5 6z" fill="#e64d8c" stroke="none" /><path d="M5 9 7 5h2L7 9z" fill="#fff" stroke="none" /></> },
  { name: 'Explorer', running: true, icon: <><path d="M1 2h5l1 2h6v8H1z" fill="#f3b62e" stroke="none" /><path d="M1 5h12v7H1z" fill="#ffd862" stroke="none" /><path d="M4 10h6v3H4z" fill="#2f86da" stroke="none" /></> },
  { name: 'Edge', running: true, icon: <><circle cx="7" cy="7" r="6" fill="#1c74cf" stroke="none" /><path d="M1 6q2-5 7-5 5 1 5 6H7q-2-3-6-1z" fill="#37c4a2" stroke="none" /><path d="M6 7q0 4 6 3l-1 1Q6 12 5 8z" fill="#e4f5ff" stroke="none" /></> },
  { name: 'Store', icon: <><path d="M1 4h12v9H1z" fill="#164e92" stroke="none" /><path d="M5 4V1h4v3" stroke="#1b75c9" /><path d="M4 6h2.500v2.500H4zM4 9.500h2.500V12H4z" fill="#f25c3a" stroke="none" /><path d="M7.500 6H10v2.500H7.500zM7.500 9.500H10V12H7.500z" fill="#4bc2f0" stroke="none" /></> },
  { name: 'Teams', running: true, icon: <><path d="M5 5h8v6q-4 3-8 0z" fill="#7b83eb" stroke="none" /><path d="M1 5h7v7H1z" fill="#4b53bc" stroke="none" /><path d="M3 7h3M4.500 7v4" stroke="#fff" /><path d="M10 0l4 7H6z" fill="#d9281e" stroke="none" /><path d="M10 2.500v2M10 5.300v.8" stroke="#fff" /></> },
  { name: 'Chrome', running: true, icon: <><circle cx="7" cy="7" r="6" fill="#e33b2e" stroke="none" /><path d="M1 5q0 8 6 8l2-5-4-1z" fill="#2da14c" stroke="none" /><path d="M7 13q6 0 6-7H9z" fill="#fbc11a" stroke="none" /><circle cx="7" cy="7" r="2.500" fill="#3179e0" stroke="#fff" /><circle cx="11" cy="3" r="3" fill="#ddd" stroke="none" /><path d="M9.500 5l1-4 2 4" /></> },
  { name: 'Rhino', running: true, icon: null },
  { name: 'Calculator', running: true, icon: <><path d="M2 1h10v12H2z" fill="#405369" stroke="none" /><path d="M3 2h8v3H3z" fill="#75c6ef" stroke="none" /><path d="M4 7h1M7 7h1M10 7h1M4 9.500h1M7 9.500h1M4 12h1M7 12h1" stroke="#fff" /><path d="M10.500 9v3" stroke="#39a3e5" strokeWidth="1.500" /></> },
  { name: 'Background app', running: true, icon: <g /> },
]

function Taskbar() {
  return (
    <footer className="grid h-[25px] shrink-0 grid-cols-[318fr_auto_309fr] items-center border-t border-[#c4c4c4] bg-linear-to-r from-[#dcdcdc] to-[#dedede]">
      <div className="flex items-center gap-[3px] pl-[9px] text-[#333]">
        <Icon className="h-[15px] w-[15px]">
          <path d="M2 12q-3-3 1-5 2-4 6-1 5 1 4 6z" fill="#9fc3ee" stroke="none" />
          <circle cx="10" cy="4" r="3.800" fill="#c92a1c" stroke="none" />
          <path d="M10 2v2.500M10 5.500v1" stroke="#fff" />
        </Icon>
        <div className="leading-[8px]"><p>29°C</p><p className="text-[#555]">Mostly cloudy</p></div>
      </div>

      <div className="flex items-center">
        <button aria-label="Start" className="mr-[8px]">
          <Icon className="h-[12px] w-[12px]"><path d="M0 0h6.500v6.500H0zM7.500 0H14v6.500H7.500zM0 7.500h6.500V14H0zM7.500 7.500H14V14H7.500z" fill="#1287d8" stroke="none" /></Icon>
        </button>
        <label className="flex h-[17px] w-[116px] items-center gap-[5px] rounded-full border border-[#d0d0d0] bg-[#f5f5f5] px-[5px]">
          <Search className="h-[8px] w-[8px]" strokeWidth={3} />
          <input placeholder="Search" aria-label="Search" className="w-[60px] flex-1 text-[7px] outline-none placeholder:text-[#555]" />
          <svg viewBox="0 0 24 12" className="h-[12px] w-[24px] shrink-0">
            <path d="M0 11q1-5 7-5l4-4 5 2q6 1 8 7-12 2-24 0z" fill="#7c8b35" />
            <path d="M7 5l5-4 5 4-5 2z" fill="#85919a" />
            <path d="M4 12q9-2 6-5l4 1-2 4z" fill="#38b6e8" />
            <circle cx="19" cy="8" r="2" fill="#e19b2c" />
            <circle cx="5" cy="8" r="2" fill="#dcb43a" />
          </svg>
        </label>
        {APPS.map(a => (
          <button key={a.name} aria-label={a.name} className={`flex h-[22px] w-[24px] flex-col items-center justify-end gap-[2px] rounded-[3px] ${a.name === 'Rhino' ? 'bg-[#f3f3f3]' : ''}`}>
            {a.icon ? <Icon className="h-[14px] w-[14px]">{a.icon}</Icon> : <RhinoMark className="h-[14px] w-[14px]" />}
            <span className={`h-[2px] rounded-full ${a.name === 'Rhino' ? 'w-[8px] bg-[#1877c9]' : a.running ? 'w-[4px] bg-[#888]' : 'w-[4px]'}`} />
          </button>
        ))}
      </div>

      <div className="flex items-center justify-end gap-[5px] pr-[11px] text-[#222]">
        <ChevronUp className="mr-[5px] h-[8px] w-[8px]" />
        <Cloud className="mr-[2px] h-[10px] w-[10px]" />
        <Icon className="h-[10px] w-[10px]"><path d="M1 1h11v8H1zM4 12h5M9 8h4v5H9z" /></Icon>
        <Volume2 className="h-[9px] w-[9px]" />
        <div className="ml-px text-right leading-[8px]"><p>9:57 am</p><p>10/30/2024</p></div>
        <Bell className="h-[8px] w-[8px] fill-[#134a9c] text-[#134a9c]" />
      </div>
    </footer>
  )
}

export default function App() {
  return (
    <div className="flex h-screen w-full flex-col overflow-hidden bg-white font-['Open_Sans','Noto_Sans',sans-serif] text-[6px] text-black">
      <div className="grid min-h-0 flex-1 grid-cols-[515fr_508fr] grid-rows-[minmax(0,1fr)]">
        <Grasshopper />
        <Rhino />
      </div>
      <Taskbar />
    </div>
  )
}
